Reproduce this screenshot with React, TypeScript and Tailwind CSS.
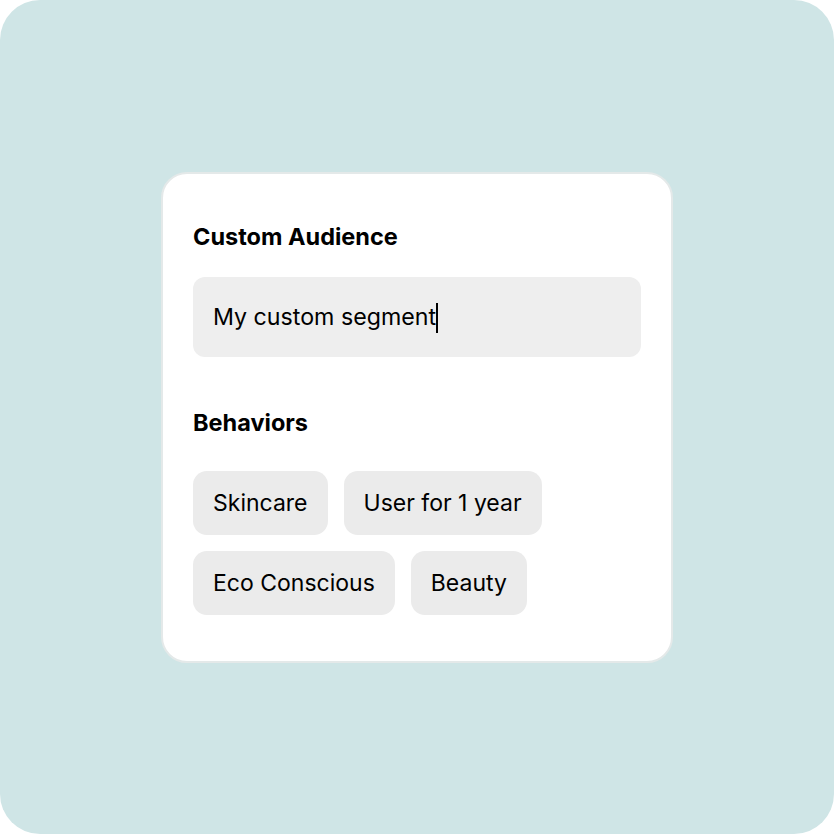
export default function App() {
  const chips1 = ["Skincare", "User for 1 year"];
  const chips2 = ["Eco Conscious", "Beauty"];
  const font = { fontFamily: "Inter, 'Noto Sans', sans-serif" };
  return (
    <div className="w-[834px] h-[834px] bg-white">
      <div
        className="w-[834px] h-[834px] rounded-[40px] bg-[#cfe5e6] flex items-center justify-center"
        style={font}
      >
        <div className="w-[512px] h-[491px] bg-white rounded-[26px] border-2 border-[#e4e9e9] px-[30px] pt-[49px] text-black">
          <div className="text-[23.5px] leading-[28px] font-bold">Custom Audience</div>
          <div className="mt-[26px] h-[80px] rounded-[12px] bg-[#eeeeee] flex items-center px-[20px] pt-[2px] text-[23.2px]">
            <span>My custom segment</span>
            <span className="inline-block w-[2px] h-[30px] bg-black" />
          </div>
          <div className="mt-[52px] text-[23.5px] leading-[28px] font-bold">Behaviors</div>
          <div className="mt-[34px] flex flex-col gap-[16px]">
            <div className="flex gap-[16px]">
              {chips1.map((c) => (
                <div key={c} className="h-[64px] px-[20px] pt-[2px] rounded-[14px] bg-[#ebebeb] flex items-center text-[23px]">
                  {c}
                </div>
              ))}
            </div>
            <div className="flex gap-[16px]">
              {chips2.map((c) => (
                <div key={c} className="h-[64px] px-[20px] pt-[2px] rounded-[14px] bg-[#ebebeb] flex items-center text-[23px]">
                  {c}
                </div>
              ))}
            </div>
          </div>
        </div>
      </div>
    </div>
  );
}
